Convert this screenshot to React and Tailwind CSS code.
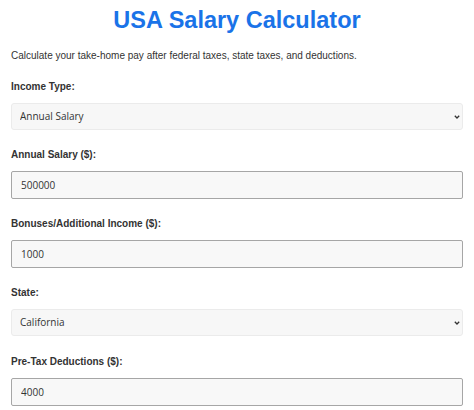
import { useState } from 'react'

function Field({ label, children, className = 'mb-[18px]' }) {
  return (
    <div className={className}>
      <label className="block text-[10px] leading-[14px] font-bold text-[#333] mb-[9px]">{label}</label>
      {children}
    </div>
  )
}

function Select({ value, onChange, options }) {
  return (
    <div className="relative">
      <select
        value={value}
        onChange={e => onChange(e.target.value)}
        className="appearance-none w-full h-[27px] pl-[8px] pr-6 rounded-[3px] border border-[#ebebeb] bg-[#f7f7f7] text-[10px] text-[#333] outline-none"
        style={{ fontFamily: '"Open Sans", sans-serif' }}
      >
        {options.map(o => <option key={o}>{o}</option>)}
      </select>
      {/* chevron */}
      <svg className="absolute right-[3px] top-[12px] pointer-events-none" width="6" height="4" viewBox="0 0 6 4">
        <path d="M0.8 0.8L3 3L5.2 0.8" fill="none" stroke="#333" strokeWidth="1.3" />
      </svg>
    </div>
  )
}

function NumberInput({ value, onChange }) {
  return (
    <input
      type="text"
      value={value}
      onChange={e => onChange(e.target.value)}
      className="block w-full h-[28px] px-[9px] rounded-[2px] border border-[#a6a6a6] bg-[#f8f8f8] text-[10px] text-[#333] outline-none"
      style={{ fontFamily: '"Open Sans", sans-serif' }}
    />
  )
}

export default function App() {
  const [incomeType, setIncomeType] = useState('Annual Salary')
  const [salary, setSalary] = useState('500000')
  const [bonus, setBonus] = useState('1000')
  const [state, setState] = useState('California')
  const [pretax, setPretax] = useState('4000')

  return (
    <div className="min-h-screen bg-white px-[11px] pt-[6px]" style={{ fontFamily: '"Liberation Sans", Arial, sans-serif' }}>
      <h1 className="text-center text-[23.5px] leading-[28px] font-bold text-[#1a73e8]">USA Salary Calculator</h1>
      <p className="mt-[14.5px] text-[10px] leading-[14px] text-[#333]">
        Calculate your take-home pay after federal taxes, state taxes, and deductions.
      </p>

      <div className="mt-[17px]">
        <Field label="Income Type:">
          <Select value={incomeType} onChange={setIncomeType} options={['Annual Salary', 'Hourly Wage', 'Monthly Salary']} />
        </Field>
        <Field label="Annual Salary ($):">
          <NumberInput value={salary} onChange={setSalary} />
        </Field>
        <Field label="Bonuses/Additional Income ($):">
          <NumberInput value={bonus} onChange={setBonus} />
        </Field>
        <Field label="State:" className="mb-[19px]">
          <Select value={state} onChange={setState} options={['California', 'New York', 'Texas', 'Florida', 'Washington']} />
        </Field>
        <Field label="Pre-Tax Deductions ($):" className="">
          <NumberInput value={pretax} onChange={setPretax} />
        </Field>
      </div>
    </div>
  )
}
